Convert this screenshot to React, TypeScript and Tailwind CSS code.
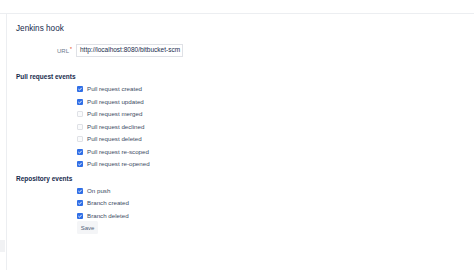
import type { ReactNode } from 'react'

const prEvents = [
  { label: 'Pull request created', checked: true },
  { label: 'Pull request updated', checked: true },
  { label: 'Pull request merged', checked: false },
  { label: 'Pull request declined', checked: false },
  { label: 'Pull request deleted', checked: false },
  { label: 'Pull request re-scoped', checked: true },
  { label: 'Pull request re-opened', checked: true },
]

const repoEvents = [
  { label: 'On push', checked: true },
  { label: 'Branch created', checked: true },
  { label: 'Branch deleted', checked: true },
]

function Box({ checked }: { checked: boolean }) {
  return checked ? (
    <span className="flex size-[6px] items-center justify-center rounded-[1px] bg-[#2f6ee6]">
      <svg viewBox="0 0 6 6" className="size-[6px]">
        <path d="M1.4 3.1 L2.5 4.2 L4.7 1.8" fill="none" stroke="#fff" strokeWidth="0.9" />
      </svg>
    </span>
  ) : (
    <span className="size-[6px] rounded-[1px] border-[0.5px] border-[#dfe1e6] bg-[#fafbfc]" />
  )
}

function Section({ title, children }: { title: string; children: ReactNode }) {
  return (
    <div className="flex flex-col">
      <div className="h-[12px] text-[6.5px] font-bold leading-[12px] text-[#172b4d]">{title}</div>
      <div className="flex flex-col pl-[61px]">{children}</div>
    </div>
  )
}

function Row({ label, checked }: { label: string; checked: boolean }) {
  return (
    <div className="flex h-[12.5px] items-center gap-[4px]">
      <Box checked={checked} />
      <span className="text-[6.2px] leading-none text-[#3d4b63]">{label}</span>
    </div>
  )
}

export default function App() {
  return (
    <div
      className="flex h-[270px] w-[474px] flex-col overflow-hidden bg-white leading-none"
      style={{ fontFamily: '"Liberation Sans", Arial, sans-serif' }}
    >
      <header className="h-[14px] shrink-0 border-b border-[#eceef1]" />
      <div className="flex flex-1">
        <aside className="flex w-[7px] shrink-0 flex-col border-r border-[#eceef1] pt-[226px]">
          <div className="h-[12px] w-[5px] bg-[#f1f2f4]" />
        </aside>
        <main className="flex flex-col pl-[9px] pt-[9px]">
          <h1 className="h-[12px] text-[8.2px] leading-[12px] text-[#172b4d]">Jenkins hook</h1>
          <div className="mt-[9px] flex items-center">
            <label className="w-[60px] pr-[4px] text-right text-[6px] text-[#6b778c]">
              URL<span className="relative -top-[2px] ml-[1px] text-[5px] text-[#de350b]">*</span>
            </label>
            <div className="flex h-[13px] w-[107px] items-center overflow-hidden whitespace-nowrap border-[0.5px] border-[#dfe1e6] pl-[3px] text-[6.5px] text-[#172b4d]">
              http://localhost:8080/bitbucket-scm
            </div>
          </div>
          <div className="mt-[14px] flex flex-col">
            <Section title="Pull request events">
              {prEvents.map((e) => (
                <Row key={e.label} label={e.label} checked={e.checked} />
              ))}
            </Section>
            <div className="mt-[2px]">
              <Section title="Repository events">
                {repoEvents.map((e) => (
                  <Row key={e.label} label={e.label} checked={e.checked} />
                ))}
              </Section>
            </div>
          </div>
          <div className="-mt-[1px] flex pl-[61px]">
            <button className="flex h-[13px] w-[21px] items-center justify-center rounded-[1.5px] bg-[#f4f5f7] text-[6px] text-[#505f79]">
              Save
            </button>
          </div>
        </main>
      </div>
    </div>
  )
}
